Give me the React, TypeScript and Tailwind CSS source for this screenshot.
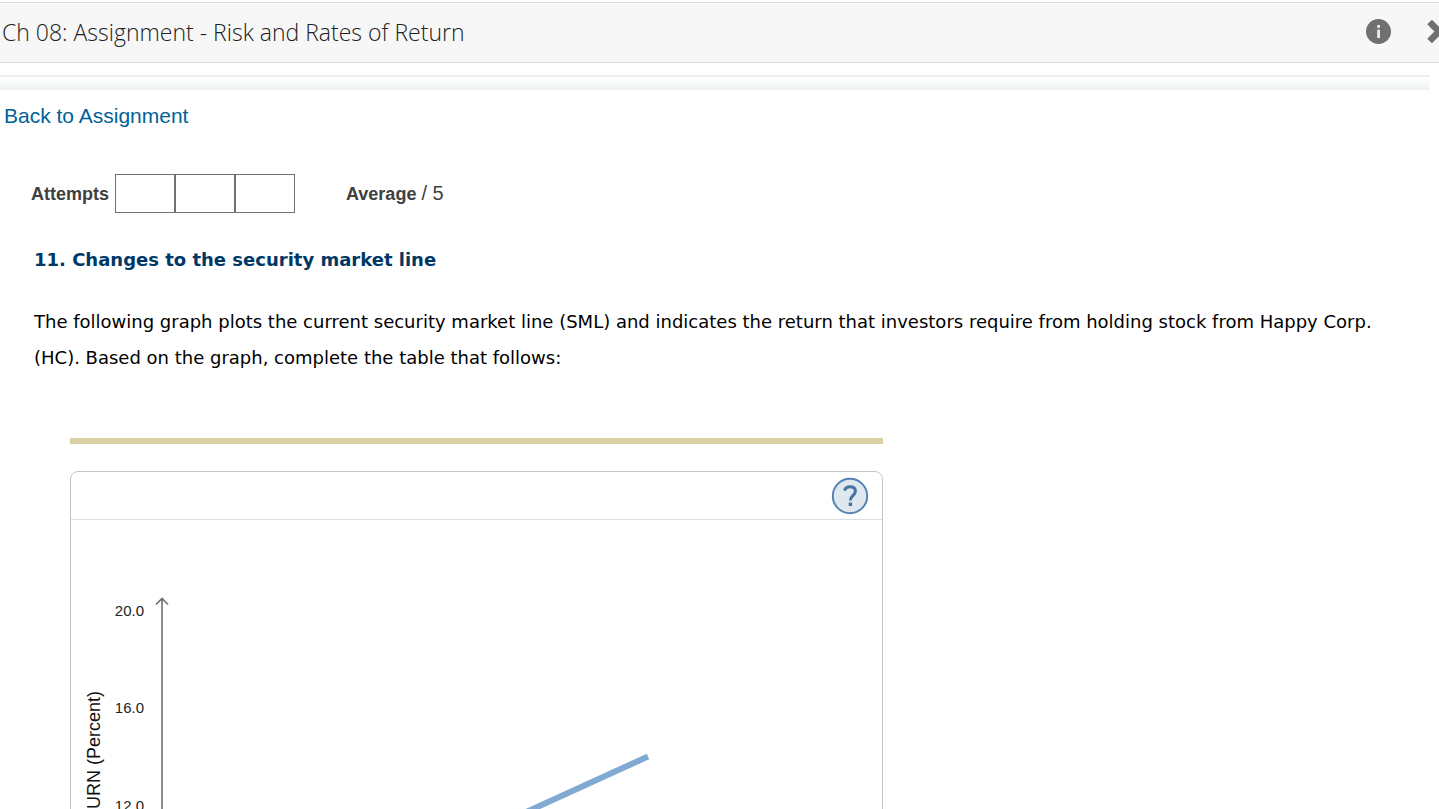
import { useState } from "react";

const ATTEMPTS = [1, 2, 3];

const TICKS = [
  { label: "20.0", y: 96 },
  { label: "16.0", y: 193 },
  { label: "12.0", y: 291 },
];

const AssignmentHeader = ({ title }: { title: string }) => (
  <header className="flex h-[61px] items-center justify-between overflow-hidden border-y border-[#dcdcdc] bg-[#f7f7f7] pb-[2px] pl-[2px]">
    <h1 className="font-['Open_Sans',sans-serif] text-[23px] leading-8 font-light whitespace-nowrap text-[#222222]">{title}</h1>
    <div className="-mr-3 flex items-center gap-9">
      <button type="button" aria-label="Information">
        <svg className="block" width="25" height="25" viewBox="0 0 25 25">
          <circle cx="12.5" cy="12.5" r="12.5" fill="#707070" />
          <rect x="11.2" y="6" width="2.8" height="2.8" fill="#ececec" />
          <path d="M11.2 10.6 H14 V19 H11.2 Z" fill="#ececec" />
        </svg>
      </button>
      <button type="button" aria-label="Close">
        <svg className="block" width="24" height="24" viewBox="0 0 24 24">
          <path d="M2.6 2 L21.4 21 M21.4 2 L2.6 21" stroke="#707070" strokeWidth="6.6" />
        </svg>
      </button>
    </div>
  </header>
);

const Attempts = () => (
  <div className="flex items-center pl-[31px] font-['Liberation_Sans',sans-serif] text-lg text-[#404040]">
    <span className="font-bold">Attempts</span>
    <div className="ml-[6px] flex">
      {ATTEMPTS.map((attempt) => (
        <div key={attempt} className="h-[39px] w-[60px] border border-[#707070]" />
      ))}
    </div>
    <p className="ml-[51px]">
      <span className="font-bold">Average</span> <span className="text-xl">/ 5</span>
    </p>
  </div>
);

const MarketLineChart = () => (
  <svg className="block" width="811" height="640" viewBox="0 0 811 640" fontFamily="'Liberation Sans', sans-serif">
    <text transform="translate(29 171) rotate(-90)" textAnchor="end" fontSize="18" fill="#111111">
      RETURN (Percent)
    </text>
    {TICKS.map((tick) => (
      <text key={tick.label} x="73" y={tick.y} textAnchor="end" fontSize="15" fill="#222222">
        {tick.label}
      </text>
    ))}
    <path d="M91 575 V79 M85 84.5 L91 78.5 L97 84.5" fill="none" stroke="#707070" strokeWidth="1.6" />
    <path d="M91 458 L577 236.5" stroke="#81aad3" strokeWidth="6" />
  </svg>
);

const GraphPanel = () => {
  const [showHelp, setShowHelp] = useState(false);

  return (
    <section className="rounded-lg border border-[#c4c4c4]">
      <div className="flex h-12 items-center justify-end border-b border-[#dedede] pr-[13px]">
        <button type="button" aria-label="Help" aria-expanded={showHelp} onClick={() => setShowHelp((prev) => !prev)}>
          <svg className="block" width="38" height="38" viewBox="0 0 38 38">
            <circle cx="19" cy="19" r="17.2" fill="#dfe7ef" stroke="#5483b1" strokeWidth="2" />
            <path
              d="M13.6 13.6 C14.2 11 16.2 9.8 19 9.8 C22.4 9.8 24.4 11.6 24.4 14.2 C24.4 18.2 19.4 18.6 19.4 23.4"
              fill="none"
              stroke="#4274a6"
              strokeWidth="3"
            />
            <rect x="17.7" y="25.6" width="3.4" height="3.4" fill="#4274a6" />
          </svg>
        </button>
      </div>
      <div className="overflow-hidden">
        <MarketLineChart />
      </div>
    </section>
  );
};

const App = () => (
  <div className="h-screen overflow-hidden bg-white pt-[2px]">
    <AssignmentHeader title="Ch 08: Assignment - Risk and Rates of Return" />
    <div className="mt-3 mr-[9px] h-[15px] border-t-2 border-[#e9eeef] bg-linear-to-b from-white to-[#edf2f3]" />

    <main className="pt-3">
      <a href="#assignment" className="ml-1 inline-block font-['Liberation_Sans',sans-serif] text-[21px] leading-7 text-[#006298]">
        Back to Assignment
      </a>
      <div className="mt-11">
        <Attempts />
      </div>

      <article className="px-[34px] font-['DejaVu_Sans',sans-serif] text-lg">
        <h2 className="mt-[33px] leading-7 font-bold text-[#003865]">11. Changes to the security market line</h2>
        <p className="mt-[30px] leading-9 text-black">
          The following graph plots the current security market line (SML) and indicates the return that investors
          require from holding stock from Happy Corp. (HC). Based on the graph, complete the table that follows:
        </p>
        <div className="mt-[62px] ml-9 max-w-[813px]">
          <hr className="mb-[27px] h-[6px] border-0 bg-[#dbd0a3]" />
          <GraphPanel />
        </div>
      </article>
    </main>
  </div>
);

export default App;
